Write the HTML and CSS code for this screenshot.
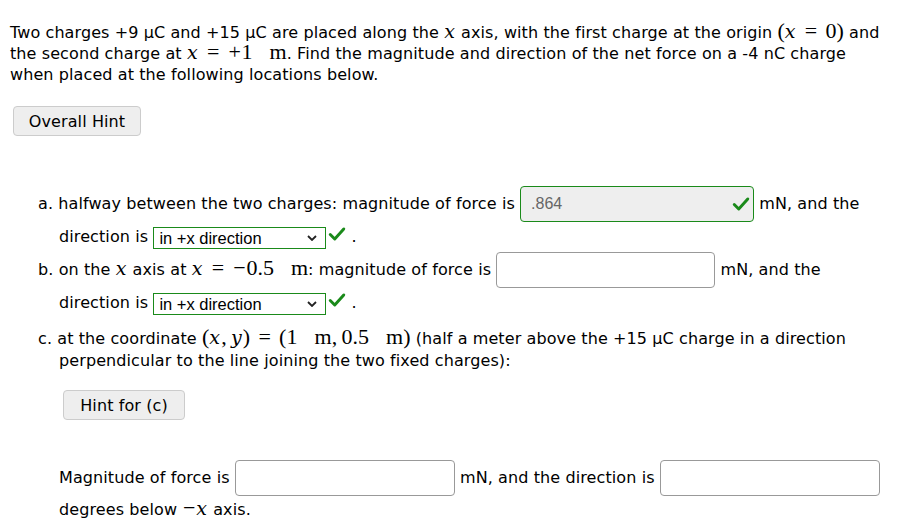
FILE: index.html
```html
<!DOCTYPE html>
<html>
<head>
<meta charset="utf-8">
<link rel="stylesheet" href="styles.css">
</head>
<body>
<div class="page">
  <p class="intro">Two charges +9 μC and +15 μC are placed along the <span class="m"><i>x</i></span> axis, with the first charge at the origin <span class="m">(<i>x</i><span class="rel">=</span>0)</span> and the second charge at <span class="m"><i>x</i><span class="rel">=</span><span class="un">+</span>1<span class="sp"></span>m</span>. Find the magnitude and direction of the net force on a -4 nC charge when placed at the following locations below.</p>
  <button class="btn btn-overall">Overall Hint</button>

  <div class="parts">
    <div class="part part-a">a. halfway between the two charges: magnitude of force is <span class="ans ans-correct"><input class="field field-correct" type="text" value=".864"><svg class="check in-field" viewBox="0 0 16 16"><path d="M2 8.5 L6 12.5 L14 3.5" fill="none" stroke="#1a8a1a" stroke-width="2.6" stroke-linecap="round" stroke-linejoin="round"/></svg></span> mN, and the direction is <span class="select"><span class="select-text">in +x direction</span><svg class="chev" viewBox="0 0 10 6"><path d="M1 1 L5 5 L9 1" fill="none" stroke="#222" stroke-width="1.8"/></svg></span><svg class="check" viewBox="0 0 16 16"><path d="M2 8.5 L6 12.5 L14 3.5" fill="none" stroke="#1a8a1a" stroke-width="2.6" stroke-linecap="round" stroke-linejoin="round"/></svg> .</div>

    <div class="part part-b">b. on the <span class="m"><i>x</i></span> axis at <span class="m"><i>x</i><span class="rel">=</span><span class="un">−</span>0.5<span class="sp"></span>m</span>: magnitude of force is <input class="field field-b" type="text"> mN, and the direction is <span class="select"><span class="select-text">in +x direction</span><svg class="chev" viewBox="0 0 10 6"><path d="M1 1 L5 5 L9 1" fill="none" stroke="#222" stroke-width="1.8"/></svg></span><svg class="check" viewBox="0 0 16 16"><path d="M2 8.5 L6 12.5 L14 3.5" fill="none" stroke="#1a8a1a" stroke-width="2.6" stroke-linecap="round" stroke-linejoin="round"/></svg> .</div>

    <div class="part part-c">c. at the coordinate <span class="m">(<i>x</i><span class="pc">,</span><i>y</i>)<span class="rel">=</span>(1<span class="sp"></span>m<span class="pc">,</span>0.5<span class="sp"></span>m)</span> (half a meter above the +15 μC charge in a direction perpendicular to the line joining the two fixed charges):
      <div class="hint-wrap"><button class="btn btn-c">Hint for (c)</button></div>
      <div class="final">Magnitude of force is <input class="field field-c" type="text"> mN, and the direction is <input class="field field-c" type="text"> degrees below <span class="m"><span class="un">−</span><i>x</i></span> axis.</div>
    </div>
  </div>
</div>
</body>
</html>
```

FILE: styles.css
```css
html, body {
  margin: 0;
  padding: 0;
  background: #fff;
}
body {
  font-family: "DejaVu Sans", "Open Sans", sans-serif;
  font-size: 16px;
  letter-spacing: 0.1px;
  color: #000;
}
.page {
  padding: 22px 14px 0 10px;
}
.intro {
  margin: 0;
  line-height: 21px;
}
.m {
  font-family: "Liberation Serif", "DejaVu Serif", serif;
  font-size: 22px;
  line-height: 0;
  letter-spacing: 0;
}
.m i {
  font-family: "DejaVu Serif", "Liberation Serif", serif;
  font-size: 19px;
  font-style: italic;
  padding: 0 1px 0 0;
}
.rel,
.un,
.pc,
.sp {
  display: inline-block;
  text-indent: 0;
  text-align: center;
}
.rel {
  width: 17px;
  margin: 0 6px;
}
.un {
  width: 14px;
}
.pc {
  width: 6px;
  margin-right: 4px;
}
.sp {
  width: 17px;
}
.btn {
  font-family: inherit;
  font-size: 16px;
  letter-spacing: 0.1px;
  color: #000;
  background: #eee;
  border: 1px solid #ccc;
  border-radius: 4px;
  height: 30px;
  padding: 0 8px;
}
.btn-overall {
  margin: 21px 0 0 3px;
  width: 128px;
}
.parts {
  margin-top: 50px;
}
.part {
  padding-left: 49px;
  text-indent: -21px;
  line-height: 30px;
}
.ans {
  position: relative;
  display: inline-block;
  vertical-align: middle;
  text-indent: 0;
}
.field {
  box-sizing: border-box;
  height: 36px;
  border: 1px solid #999;
  border-radius: 4px;
  background: #fff;
  vertical-align: middle;
  font-family: "Liberation Sans", sans-serif;
  font-size: 16px;
  padding: 0 10px;
  text-indent: 0;
  margin: 0;
}
.field-correct {
  width: 234px;
  border-color: #1a8a1a;
  background: #eee;
  color: #666;
  padding-left: 10px;
  display: block;
}
.check {
  width: 18px;
  height: 18px;
  vertical-align: -1px;
  margin-left: 2px;
}
.check.in-field {
  position: absolute;
  right: 4px;
  top: 9px;
  margin: 0;
}
.select {
  display: inline-flex;
  align-items: center;
  justify-content: space-between;
  box-sizing: border-box;
  width: 173px;
  height: 22px;
  border: 1px solid #1a8a1a;
  padding: 0 8px 0 5px;
  vertical-align: middle;
  font-family: "Liberation Sans", sans-serif;
  font-size: 16.5px;
  letter-spacing: 0;
  line-height: 20px;
  text-indent: 0;
}
.chev {
  width: 10px;
  height: 6px;
}
.field-b {
  width: 219px;
}
.field-c {
  width: 220px;
}
.part-c {
  line-height: 22px;
  margin-top: 10px;
}
.hint-wrap {
  text-indent: 0;
  margin: 18px 0 0 -25px;
  padding-left: 29px;
  line-height: 24px;
}
.btn-c {
  width: 122px;
}
.final {
  text-indent: 0;
  margin: 40px 0 0 -28px;
  padding-left: 28px;
  line-height: 28px;
}
```
